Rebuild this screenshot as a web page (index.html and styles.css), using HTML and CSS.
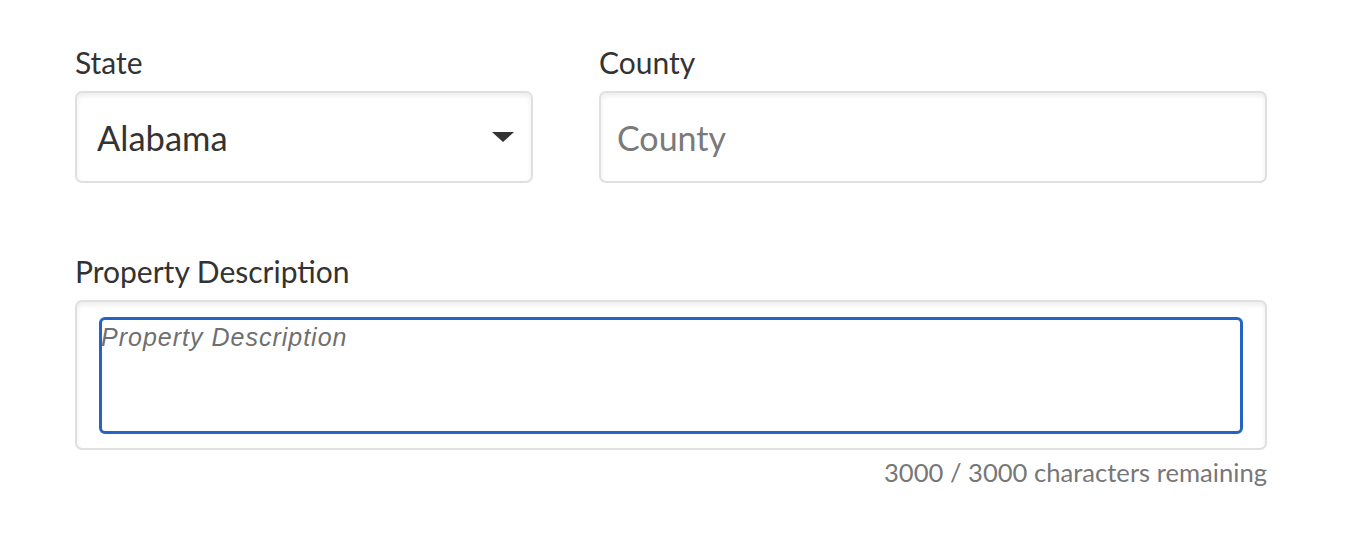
FILE: index.html
```html
<!DOCTYPE html>
<html>
<head>
<meta charset="utf-8">
<link rel="stylesheet" href="styles.css">
</head>
<body>
<form class="form">
  <div class="row">
    <div class="field">
      <label class="label">State</label>
      <div class="box select">
        <span class="value">Alabama</span>
        <span class="caret"></span>
      </div>
    </div>
    <div class="field">
      <label class="label">County</label>
      <div class="box input">
        <span class="placeholder">County</span>
      </div>
    </div>
  </div>
  <div class="field desc">
    <label class="label">Property Description</label>
    <div class="box area-wrap">
      <div class="area"><span class="area-ph">Property Description</span></div>
    </div>
    <div class="counter">3000 / 3000 characters remaining</div>
  </div>
</form>
</body>
</html>
```
FILE: styles.css
```css
html, body {
  margin: 0;
  padding: 0;
  background: #fff;
}
body {
  font-family: "Lato", "Open Sans", sans-serif;
  color: #333;
}
.form {
  width: 1192px;
  padding: 44px 0 0 75px;
}
.row {
  display: grid;
  grid-template-columns: 458px 668px;
  column-gap: 66px;
}
.field {
  display: flex;
  flex-direction: column;
}
.label {
  font-size: 30px;
  line-height: 36px;
  color: #333;
  margin-bottom: 11px;
}
.box {
  box-sizing: border-box;
  height: 92px;
  border: 2px solid #e0e0e0;
  border-radius: 7px;
  background: #fff;
  box-shadow: inset 0 3px 5px rgba(0, 0, 0, 0.07);
  display: flex;
  align-items: center;
}
.select {
  justify-content: space-between;
  padding: 0 17px 0 20px;
}
.input {
  padding: 0 16px;
}
.value {
  font-size: 34.5px;
  color: #333;
}
.placeholder {
  font-size: 34px;
  color: #7a7a7a;
}
.caret {
  width: 0;
  height: 0;
  border-left: 11px solid transparent;
  border-right: 11px solid transparent;
  border-top: 10px solid #333;
}
.desc {
  margin-top: 70px;
}
.area-wrap {
  height: 150px;
  padding: 15px 22px 14px 22px;
  align-items: stretch;
}
.area {
  flex: 1;
  border: 3px solid #2563c4;
  border-radius: 6px;
}
.area-ph {
  display: block;
  font-family: "Liberation Sans", Arial, sans-serif;
  font-style: italic;
  font-size: 25px;
  letter-spacing: 1px;
  color: #6f6f6f;
  line-height: 30px;
  margin-top: 2px;
  margin-left: -1px;
}
.counter {
  text-align: right;
  font-size: 25.6px;
  color: #777;
  margin-top: 7px;
}
```
